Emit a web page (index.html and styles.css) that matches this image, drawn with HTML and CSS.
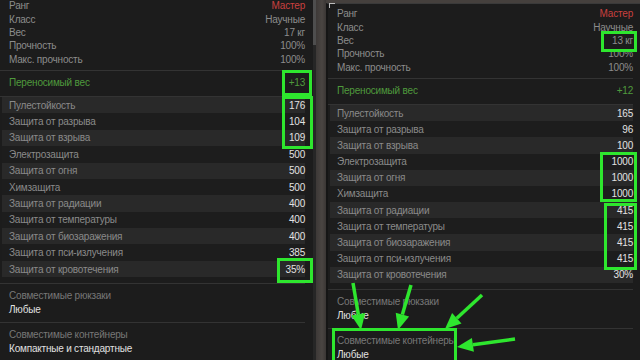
FILE: index.html
```html
<!DOCTYPE html>
<html lang="ru">
<head>
<meta charset="utf-8">
<title>Сравнение</title>
<link rel="stylesheet" href="styles.css">
</head>
<body>
<div class="screen">
  <div class="panel panel-left">
    <div class="panel-body">
      <section class="info">
        <div class="line"><span>Ранг</span><span class="red">Мастер</span></div>
        <div class="line"><span>Класс</span><span>Научные</span></div>
        <div class="line"><span>Вес</span><span>17 кг</span></div>
        <div class="line"><span>Прочность</span><span>100%</span></div>
        <div class="line"><span>Макс. прочность</span><span>100%</span></div>
      </section>
      <section class="carry">
        <div class="line"><span>Переносимый вес</span><span>+13</span></div>
      </section>
      <section class="stats">
        <div class="row"><span>Пулестойкость</span><span class="val">176</span></div>
        <div class="row"><span>Защита от разрыва</span><span class="val">104</span></div>
        <div class="row"><span>Защита от взрыва</span><span class="val">109</span></div>
        <div class="row"><span>Электрозащита</span><span class="val">500</span></div>
        <div class="row"><span>Защита от огня</span><span class="val">500</span></div>
        <div class="row"><span>Химзащита</span><span class="val">500</span></div>
        <div class="row"><span>Защита от радиации</span><span class="val">400</span></div>
        <div class="row"><span>Защита от температуры</span><span class="val">400</span></div>
        <div class="row"><span>Защита от биозаражения</span><span class="val">400</span></div>
        <div class="row"><span>Защита от пси-излучения</span><span class="val">385</span></div>
        <div class="row"><span>Защита от кровотечения</span><span class="val">35%</span></div>
      </section>
      <section class="compat">
        <div class="ctitle">Совместимые рюкзаки</div>
        <div class="cval">Любые</div>
      </section>
      <section class="compat">
        <div class="ctitle">Совместимые контейнеры</div>
        <div class="cval">Компактные и стандартные</div>
      </section>
    </div>
    <div class="scrollbar"><div class="thumb"></div></div>
  </div>

  <div class="divider"></div>

  <div class="panel panel-right">
    <div class="panel-body">
      <section class="info">
        <div class="line"><span>Ранг</span><span class="red">Мастер</span></div>
        <div class="line"><span>Класс</span><span>Научные</span></div>
        <div class="line"><span>Вес</span><span>13 кг</span></div>
        <div class="line"><span>Прочность</span><span>100%</span></div>
        <div class="line"><span>Макс. прочность</span><span>100%</span></div>
      </section>
      <section class="carry">
        <div class="line"><span>Переносимый вес</span><span>+12</span></div>
      </section>
      <section class="stats">
        <div class="row"><span>Пулестойкость</span><span class="val">165</span></div>
        <div class="row"><span>Защита от разрыва</span><span class="val">96</span></div>
        <div class="row"><span>Защита от взрыва</span><span class="val">100</span></div>
        <div class="row"><span>Электрозащита</span><span class="val">1000</span></div>
        <div class="row"><span>Защита от огня</span><span class="val">1000</span></div>
        <div class="row"><span>Химзащита</span><span class="val">1000</span></div>
        <div class="row"><span>Защита от радиации</span><span class="val">415</span></div>
        <div class="row"><span>Защита от температуры</span><span class="val">415</span></div>
        <div class="row"><span>Защита от биозаражения</span><span class="val">415</span></div>
        <div class="row"><span>Защита от пси-излучения</span><span class="val">415</span></div>
        <div class="row"><span>Защита от кровотечения</span><span class="val">30%</span></div>
      </section>
      <section class="compat">
        <div class="ctitle">Совместимые рюкзаки</div>
        <div class="cval">Любые</div>
      </section>
      <section class="compat">
        <div class="ctitle">Совместимые контейнеры</div>
        <div class="cval">Любые</div>
      </section>
    </div>
  </div>

  <div class="annot">
    <div class="hl hl-a"></div>
    <div class="hl hl-b"></div>
    <div class="hl hl-c"></div>
    <div class="hl hl-d"></div>
    <div class="hl hl-e"></div>
    <div class="hl hl-f"></div>
    <div class="hl hl-g"></div>
    <svg class="arrows" width="640" height="360" viewBox="0 0 640 360">
      <g stroke="#2ee62e" stroke-width="3.5" fill="none">
        <line x1="353" y1="283" x2="358.3" y2="314.2"/>
        <line x1="411" y1="285" x2="402.4" y2="314.6"/>
        <line x1="482" y1="295" x2="456.8" y2="318.2"/>
        <line x1="515" y1="339" x2="472.9" y2="344.8"/>
      </g>
      <g fill="#2ee62e">
        <polygon points="361,330 351.4,315.4 365.2,313"/>
        <polygon points="398,330 395.7,312.7 409.1,316.5"/>
        <polygon points="445,329 452.1,313 461.5,323.4"/>
        <polygon points="457,347 471.9,337.9 473.9,351.7"/>
      </g>
    </svg>
  </div>
</div>
</body>
</html>
```

FILE: styles.css
```css
* { box-sizing: border-box; }
html, body { margin: 0; padding: 0; }
body {
  background: #45403d;
  font-family: "Liberation Sans", Arial, sans-serif;
  font-size: 10px;
  letter-spacing: -0.2px;
}
.screen {
  position: relative;
  width: 640px;
  height: 360px;
  overflow: hidden;
  display: flex;
  background: #45403d;
}
.panel {
  display: flex;
  background: #1c1c1c;
  height: 380px;
}
.panel-left {
  width: 316px;
  margin-top: -1px;
}
.panel-left .panel-body {
  width: 313px;
  padding: 0 8px 0 0;
  --rh: 16.4px;
}
.scrollbar {
  width: 3px;
  background: #262626;
}
.thumb {
  height: 46px;
  background: #4e4e4e;
}
.divider {
  width: 10px;
  background: linear-gradient(90deg, #3d3937, #4a4542 60%, #3a3634);
}
.panel-right {
  position: relative;
  width: 314px;
  margin-top: 3px;
  border-top: 1px solid #3a3a3a;
  border-left: 2px solid #151515;
}
.panel-right::before {
  content: "";
  position: absolute;
  left: 1px;
  top: -1px;
  width: 5px;
  height: 4px;
  border-top: 1px solid #bdbdbd;
  border-left: 1px solid #bdbdbd;
}
.panel-right .panel-body {
  width: 312px;
  padding: 3px 7px 0 0;
  --rh: 16.2px;
}
.panel-body { display: flex; flex-direction: column; }

.line, .row {
  display: flex;
  justify-content: space-between;
  align-items: center;
}
.info {
  padding: 0 0 4px 9px;
  color: #8c8c8c;
  border-bottom: 1px solid #333;
}
.info .line { height: 13.4px; }
.red { color: #c9403f; }
.carry {
  padding: 5px 0 6px 9px;
  color: #4f9a3c;
  border-bottom: 1px solid #333;
}
.carry .line { height: 14px; }
.stats {
  padding: 0 0 5.5px 2px;
  border-bottom: 1px solid #333;
}
.row {
  height: var(--rh);
  padding-left: 7px;
  color: #8a8a8a;
  background: #1d1d1d;
}
.row:nth-child(odd) { background: #292929; }
.val { color: #e2e2e2; }
.compat {
  padding: 5px 0 5px 9px;
  border-bottom: 1px solid #333;
}
.ctitle { height: 14px; line-height: 14px; color: #777; }
.cval { height: 14px; line-height: 14px; color: #e0e0e0; }

.annot {
  position: absolute;
  left: 0;
  top: 0;
  width: 640px;
  height: 360px;
  pointer-events: none;
}
.hl {
  position: absolute;
  border: 3px solid #2ee62e;
}
.hl-a { left: 282px; top: 70px; width: 30px; height: 26px; }
.hl-b { left: 282px; top: 96px; width: 31px; height: 53px; }
.hl-c { left: 277px; top: 258px; width: 36px; height: 25px; }
.hl-d { left: 601px; top: 31px; width: 36px; height: 21px; }
.hl-e { left: 600px; top: 152px; width: 37px; height: 50px; }
.hl-f { left: 604px; top: 203px; width: 33px; height: 67px; }
.hl-g { left: 332px; top: 328px; width: 125px; height: 40px; }
.arrows { position: absolute; left: 0; top: 0; }
```
